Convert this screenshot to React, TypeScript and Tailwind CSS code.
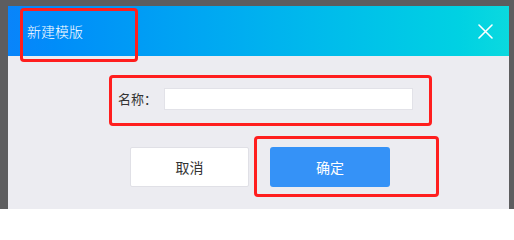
export default function App() {
  return (
    <div
      className="relative flex h-[209px] w-[514px] flex-col overflow-hidden bg-[#5d5d5f] pl-[8px] pr-[5px] pt-[6px]"
      style={{ fontFamily: '"Noto Sans CJK SC", "Liberation Sans", sans-serif' }}
    >
      <div className="flex flex-1 flex-col bg-[#ececf1]">
        {/* header */}
        <div className="flex h-[50px] items-center justify-between bg-gradient-to-r from-[#0984fb] to-[#0bd9df] pl-[19px] pr-[16px]">
          <span className="text-[14px] font-light text-white">新建模版</span>
          <svg width="15" height="15" viewBox="0 0 15 15" className="text-white">
            <path d="M1 1L14 14M14 1L1 14" stroke="currentColor" strokeWidth="1.6" strokeLinecap="round" />
          </svg>
        </div>

        {/* body */}
        <div className="flex items-center pl-[110px] pt-[32px]">
          <span className="w-[46px] text-[13px] text-[#333]">名称：</span>
          <input className="h-[22px] w-[249px] border border-[#e2e2e8] bg-white outline-none" />
        </div>

        <div className="mt-[37px] flex gap-[21px] pl-[122px]">
          <button className="h-[40px] w-[119px] rounded-[2px] border border-[#e0e0e6] bg-white text-[14px] text-[#333]">
            取消
          </button>
          <button className="h-[40px] w-[120px] rounded-[3px] bg-[#3592f7] text-[14px] text-white">
            确定
          </button>
        </div>
      </div>

      {/* red annotation boxes */}
      <div className="absolute left-[20px] top-[8px] h-[54px] w-[118px] rounded-[4px] border-[3px] border-[#ff1e1e]" />
      <div className="absolute left-[109px] top-[75px] h-[51px] w-[323px] rounded-[4px] border-[3px] border-[#ff1e1e]" />
      <div className="absolute left-[254px] top-[136px] h-[61px] w-[185px] rounded-[4px] border-[3px] border-[#ff1e1e]" />
    </div>
  );
}
